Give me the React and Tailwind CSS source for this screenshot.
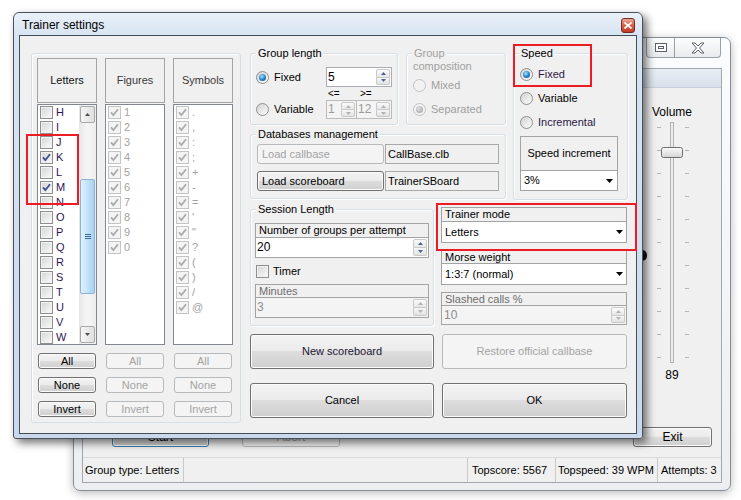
import React from 'react'
import clsx from 'clsx'

const letters = ['H', 'I', 'J', 'K', 'L', 'M', 'N', 'O', 'P', 'Q', 'R', 'S', 'T', 'U', 'V', 'W']
const figures = ['1', '2', '3', '4', '5', '6', '7', '8', '9', '0']
const symbols = ['.', ',', ':', ';', '+', '-', '=', "'", '"', '?', '(', ')', '/', '@']
const ticks = [0, 1, 2, 3, 4, 5, 6, 7, 8, 9, 10]

function Check({ checked, disabled }) {
  return (
    <span
      className={clsx(
        'w-[13px] h-[13px] shrink-0 border flex items-center justify-center',
        disabled
          ? 'border-[#c4c4c4] bg-[#f4f4f4]'
          : 'border-[#8e8f8f] bg-[linear-gradient(135deg,#d4d4d4,#fbfbfb)] shadow-[inset_0_0_0_1px_#f2f2f2]'
      )}
    >
      {checked && (
        <svg width="11" height="11" viewBox="0 0 11 11">
          <path d="M2 5.3 L4.4 8 L9 2.3" fill="none" stroke={disabled ? '#ababab' : '#3c4f8e'} strokeWidth="1.8" />
        </svg>
      )}
    </span>
  )
}

function Radio({ checked, disabled }) {
  return (
    <span
      className={clsx(
        'w-[13px] h-[13px] shrink-0 rounded-full border flex items-center justify-center',
        disabled ? 'border-[#c2c2c2] bg-[#f2f2f2]' : 'border-[#8e8f8f] bg-[linear-gradient(135deg,#d2d2d2,#fcfcfc)]'
      )}
    >
      {checked && (
        <span
          className={clsx(
            'w-[7px] h-[7px] rounded-full',
            disabled
              ? 'bg-[radial-gradient(circle_at_40%_35%,#e0e0e0,#9c9c9c)]'
              : 'bg-[radial-gradient(circle_at_40%_35%,#a8e2ff,#2a88ca_50%,#0b4880)]'
          )}
        />
      )}
    </span>
  )
}

function Btn({ children, disabled, def, className }) {
  return (
    <div
      className={clsx(
        'flex items-center rounded-[3px] border shrink-0 whitespace-nowrap',
        disabled
          ? 'border-[#b6babd] bg-[#f4f4f4] text-[#a3a3a3]'
          : 'bg-[linear-gradient(#f3f3f3_0%,#ebebeb_49%,#dddddd_50%,#cfcfcf_100%)] shadow-[inset_0_0_0_1px_#fbfbfb]',
        !disabled && (def ? 'border-[#3c7fb1]' : 'border-[#707070]'),
        className
      )}
    >
      {children}
    </div>
  )
}

function SpinBtns({ disabled }) {
  const c = disabled ? '#b3b3b3' : '#4a6290'
  return (
    <div className="flex flex-col w-[15px] h-full py-[1px] pr-[1px] shrink-0">
      <div className="flex-1 flex items-center justify-center border border-[#c9c9c9] rounded-t-[2px] bg-[linear-gradient(#fbfbfb,#e7e7e7)]">
        <svg width="5" height="3" viewBox="0 0 5 3">
          <path d="M0 3H5L2.5 0Z" fill={c} />
        </svg>
      </div>
      <div className="flex-1 flex items-center justify-center border border-t-0 border-[#c9c9c9] rounded-b-[2px] bg-[linear-gradient(#f6f6f6,#e2e2e2)]">
        <svg width="5" height="3" viewBox="0 0 5 3">
          <path d="M0 0H5L2.5 3Z" fill={c} />
        </svg>
      </div>
    </div>
  )
}

function Head({ children, className }) {
  return (
    <div className={clsx('flex items-center pl-[3px] border border-[#a3a3a3] shrink-0 whitespace-nowrap', className)}>{children}</div>
  )
}

function Drop({ value, className }) {
  return (
    <div className={clsx('flex items-center bg-white border border-t-0 border-[#a3a3a3] pl-[3px] shrink-0', className)}>
      <span className="flex-1">{value}</span>
      <svg width="7" height="4" viewBox="0 0 7 4">
        <path d="M0 0H7L3.5 4Z" fill="#000" />
      </svg>
    </div>
  )
}

function Field({ children, className }) {
  return <div className={clsx('flex items-center pl-[2px] border border-[#a8a8a8]', className)}>{children}</div>
}

function Group({ label, className, labelClass, children }) {
  return (
    <div className={clsx('pt-[6px] shrink-0', className)}>
      <div className="h-full rounded-[3px] border border-[#d5dfe5] shadow-[inset_1px_1px_0_#fff,1px_1px_0_#fff]">
        <div className={clsx('-mt-[7px] ml-[5px] px-[2px] w-fit bg-[#f0f0f0] leading-[13px] whitespace-nowrap', labelClass)}>{label}</div>
        {children}
      </div>
    </div>
  )
}

function VScroll() {
  return (
    <div className="w-[17px] h-full flex flex-col shrink-0 bg-[linear-gradient(90deg,#e6e6e6,#f5f5f5_45%,#ededed)]">
      <div className="h-[17px] mx-[1px] mt-[1px] rounded-[2px] border border-[#a9a9a9] bg-[linear-gradient(90deg,#f5f5f5,#e0e0e0)] flex items-center justify-center">
        <svg width="5" height="3" viewBox="0 0 5 3">
          <path d="M0 3H5L2.5 0Z" fill="#4d4d4d" />
        </svg>
      </div>
      <div className="h-[56px]" />
      <div className="h-[115px] mx-[1px] rounded-[2px] border border-[#8cb3d6] bg-[linear-gradient(90deg,#e2f1fc,#c3e3f9_50%,#a7d2f3)] flex items-center justify-center">
        <svg width="6" height="6" viewBox="0 0 6 6">
          <path d="M0 0.5H6M0 2.5H6M0 4.5H6" stroke="#3f6f99" strokeWidth="1" />
        </svg>
      </div>
      <div className="flex-1" />
      <div className="h-[17px] mx-[1px] mb-[1px] rounded-[2px] border border-[#a9a9a9] bg-[linear-gradient(90deg,#f5f5f5,#e0e0e0)] flex items-center justify-center">
        <svg width="5" height="3" viewBox="0 0 5 3">
          <path d="M0 0H5L2.5 3Z" fill="#4d4d4d" />
        </svg>
      </div>
    </div>
  )
}

function Column({ title, items, checked, disabled, scroll, headClass, textClass }) {
  return (
    <div className="w-[60px] flex flex-col shrink-0">
      <div className={clsx('h-[45px] border border-[#a3a3a3] flex items-center justify-center', headClass)}>{title}</div>
      <div className="mt-[1px] h-[241px] border border-[#828790] bg-white flex overflow-hidden">
        <div className="flex-1 pl-[2px] flex flex-col">
          {items.map((it) => (
            <div key={it} className="h-[15px] flex items-center gap-[3px] shrink-0">
              <Check checked={disabled || checked.includes(it)} disabled={disabled} />
              <span className={textClass}>{it}</span>
            </div>
          ))}
        </div>
        {scroll && <VScroll />}
      </div>
      <Btn disabled={disabled} className="mt-[8px] ml-[1px] w-[58px] h-[16px] justify-center">All</Btn>
      <Btn disabled={disabled} className="mt-[8px] ml-[1px] w-[58px] h-[16px] justify-center">None</Btn>
      <Btn disabled={disabled} className="mt-[8px] ml-[1px] w-[58px] h-[16px] justify-center">Invert</Btn>
    </div>
  )
}

function Dialog() {
  return (
    <div className="absolute left-[13px] top-[12px] w-[630px] h-[427px] rounded-t-[6px] rounded-b-[3px] border border-[#47525e] bg-[linear-gradient(180deg,#eaf1f9_0px,#d7e4f2_22px,#c9d9eb_100%)] shadow-[4px_4px_9px_rgba(0,0,0,0.55)] flex flex-col">
      <div className="h-[22px] flex items-start justify-between pl-[8px] pr-[7px] shrink-0">
        <span className="mt-[5px] text-[12px] leading-[14px]">Trainer settings</span>
        <div className="mt-[5px] w-[14px] h-[15px] rounded-[3px] border border-[#772a1f] bg-[linear-gradient(#eba796,#d4634b_50%,#c03b25)] flex items-center justify-center">
          <svg width="8" height="7" viewBox="0 0 8 7">
            <path d="M0.5 0.5L7.5 6.5M7.5 0.5L0.5 6.5" stroke="#fff" strokeWidth="1.6" />
          </svg>
        </div>
      </div>
      <div className="mx-[5px] h-[399px] border border-[#444e59] bg-[#f0f0f0] flex items-start shrink-0">
        <div className="ml-[11px] mt-[17px] w-[210px] h-[370px] rounded-[3px] border border-[#d5dfe5] shadow-[inset_1px_1px_0_#fff] flex gap-[8px] pl-[5px] pt-[4px] shrink-0">
          <Column title="Letters" items={letters} checked={['K', 'M']} scroll textClass="text-[#2e1452]" headClass="text-[#111]" />
          <Column title="Figures" items={figures} checked={[]} disabled textClass="text-[#a3a3a3]" headClass="text-[#3a3a3a]" />
          <Column title="Symbols" items={symbols} checked={[]} disabled textClass="text-[#a3a3a3]" headClass="text-[#3a3a3a]" />
        </div>

        <div className="ml-[9px] mt-[11px] w-[378px] flex flex-col shrink-0">
          <div className="flex">
            <div className="w-[256px] flex flex-col">
              <div className="flex gap-[8px]">
                <Group label="Group length" className="w-[148px] h-[78px]">
                  <div className="px-[5px] pt-[7px]">
                    <div className="h-[20px] flex items-center">
                      <Radio checked />
                      <span className="ml-[5px]">Fixed</span>
                      <div className="ml-auto w-[66px] h-full flex bg-white border border-[#abadb3]">
                        <span className="flex-1 pl-[1px] text-[12px] leading-[18px]">5</span>
                        <SpinBtns />
                      </div>
                    </div>
                    <div className="h-[13px] flex justify-end">
                      <div className="w-[66px] flex text-[10px] leading-[13px]">
                        <span className="w-[32px] pl-[2px]">&lt;=</span>
                        <span className="pl-[2px]">&gt;=</span>
                      </div>
                    </div>
                    <div className="h-[19px] flex items-center">
                      <Radio />
                      <span className="ml-[5px]">Variable</span>
                      <div className="ml-auto w-[66px] h-full flex">
                        <div className="w-[31px] h-full flex border border-[#bcbcbc] bg-[#f4f4f4] text-[#9a9a9a]">
                          <span className="flex-1 pl-[1px] text-[12px] leading-[17px]">1</span>
                          <SpinBtns disabled />
                        </div>
                        <div className="w-[35px] h-full flex border border-l-0 border-[#bcbcbc] bg-[#f4f4f4] text-[#9a9a9a]">
                          <span className="flex-1 pl-[1px] text-[12px] leading-[17px]">12</span>
                          <SpinBtns disabled />
                        </div>
                      </div>
                    </div>
                  </div>
                </Group>
                <Group label="Group" labelClass="w-[61px] text-[#a0a0a0]" className="w-[100px] h-[78px]">
                  <div className="pl-[6px] text-[#a0a0a0]">
                    <div className="leading-[13px]">composition</div>
                    <div className="mt-[2px] h-[20px] flex items-center">
                      <Radio disabled />
                      <span className="ml-[5px]">Mixed</span>
                    </div>
                    <div className="mt-[4px] h-[20px] flex items-center">
                      <Radio disabled checked />
                      <span className="ml-[5px]">Separated</span>
                    </div>
                  </div>
                </Group>
              </div>
              <Group label="Databases management" className="mt-[3px] w-[256px] h-[71px]">
                <div className="px-[6px] pt-[3px] flex flex-col gap-[7px]">
                  <div className="h-[20px] flex">
                    <Btn disabled className="w-[127px] h-full pl-[4px]">Load callbase</Btn>
                    <Field className="flex-1 ml-[1px]">CallBase.clb</Field>
                  </div>
                  <div className="h-[20px] flex">
                    <Btn className="w-[127px] h-full pl-[4px]">Load scoreboard</Btn>
                    <Field className="flex-1 ml-[1px]">TrainerSBoard</Field>
                  </div>
                </div>
              </Group>
            </div>
            <Group label="Speed" className="ml-[7px] w-[115px] h-[153px]">
              <div className="pl-[6px] pr-[9px] pt-[2px]">
                <div className="h-[24px] flex items-center">
                  <Radio checked />
                  <span className="ml-[5px] text-[#2b1745]">Fixed</span>
                </div>
                <div className="h-[24px] flex items-center">
                  <Radio />
                  <span className="ml-[5px]">Variable</span>
                </div>
                <div className="h-[24px] flex items-center">
                  <Radio />
                  <span className="ml-[5px] text-[#2b1745]">Incremental</span>
                </div>
                <div className="mt-[2px] h-[35px] border border-[#a3a3a3] flex items-center justify-center whitespace-nowrap">Speed increment</div>
                <Drop value="3%" className="h-[20px] pr-[4px]" />
              </div>
            </Group>
          </div>

          <div className="mt-[3px] flex">
            <Group label="Session Length" className="w-[184px] h-[123px]">
              <div className="px-[4px] pt-[7px]">
                <Head className="h-[15px] pl-[2px]">Number of groups per attempt</Head>
                <div className="h-[20px] flex bg-white border border-t-0 border-[#a3a3a3]">
                  <span className="flex-1 pl-[1px] text-[12px] leading-[19px]">20</span>
                  <SpinBtns />
                </div>
                <div className="mt-[3px] h-[20px] flex items-center">
                  <span className="ml-[1px] flex">
                    <Check />
                  </span>
                  <span className="ml-[4px]">Timer</span>
                </div>
                <Head className="mt-[3px] h-[14px] pl-[2px] text-[#6d6d6d]">Minutes</Head>
                <div className="h-[20px] flex bg-[#f4f4f4] border border-t-0 border-[#a3a3a3] text-[#8d8d8d]">
                  <span className="flex-1 pl-[1px] text-[12px] leading-[19px]">3</span>
                  <SpinBtns disabled />
                </div>
              </div>
            </Group>
            <div className="ml-[7px] w-[186px] pt-[4px] flex flex-col">
              <Head className="h-[15px]">Trainer mode</Head>
              <Drop value="Letters" className="h-[21px] pr-[3px]" />
              <Head className="mt-[7px] h-[14px]">Morse weight</Head>
              <Drop value="1:3:7 (normal)" className="h-[21px] pr-[3px]" />
              <Head className="mt-[7px] h-[14px] text-[#6d6d6d]">Slashed calls %</Head>
              <div className="h-[19px] flex bg-[#f4f4f4] border border-t-0 border-[#a3a3a3] text-[#8d8d8d]">
                <span className="flex-1 pl-[2px] text-[12px] leading-[18px]">10</span>
                <SpinBtns disabled />
              </div>
            </div>
          </div>

          <div className="mt-[8px] flex gap-[8px]">
            <Btn className="w-[184px] h-[35px] justify-center text-[#221433]">New scoreboard</Btn>
            <Btn disabled className="w-[185px] h-[35px] justify-center">Restore official callbase</Btn>
          </div>
          <div className="mt-[14px] flex gap-[8px]">
            <Btn className="w-[184px] h-[35px] justify-center">Cancel</Btn>
            <Btn className="w-[185px] h-[35px] justify-center">OK</Btn>
          </div>
        </div>
      </div>
    </div>
  )
}

function BackWindow() {
  return (
    <div className="absolute left-[73px] top-[37px] w-[658px] h-[454px] rounded-[7px] border border-[#868d95] bg-[linear-gradient(180deg,#fbfcfd,#eceef1)] shadow-[0_2px_10px_rgba(0,0,0,0.28)] flex flex-col">
      <div className="h-[30px] flex justify-end items-start pr-[9px] shrink-0">
        <div className="flex h-[20px] rounded-b-[4px] border border-t-0 border-[#9aa1a9] overflow-hidden bg-[linear-gradient(#fdfdfd,#e8ebee)]">
          <div className="w-[28px] flex items-center justify-center border-r border-[#9aa1a9]">
            <svg width="12" height="10" viewBox="0 0 12 10">
              <rect x="0.5" y="0.5" width="11" height="8" fill="#fff" stroke="#5c6168" />
              <rect x="3.5" y="3.5" width="5" height="2" fill="none" stroke="#5c6168" />
            </svg>
          </div>
          <div className="w-[45px] flex items-center justify-center">
            <svg width="14" height="12" viewBox="0 0 14 12">
              <path d="M1 1H4L7 4L10 1H13L8.5 6L13 11H10L7 8L4 11H1L5.5 6Z" fill="#fff" stroke="#5c6168" strokeLinejoin="round" />
            </svg>
          </div>
        </div>
      </div>
      <div className="mx-[8px] h-[415px] border border-[#a0a7ae] bg-[#f0f0f0] flex flex-col shrink-0">
        <div className="h-[19px] bg-[linear-gradient(#e7edf4,#d8e1eb)] border-b border-[#c8d1db] shrink-0" />
        <div className="flex-1 flex justify-end pr-[19px]">
          <div className="w-[10px] h-[11px] mt-[162px] -mr-[5px] rounded-full bg-[#111]" />
          <div className="w-[60px] flex flex-col items-center pt-[17px] text-[12px]">
            <div className="leading-[14px]">Volume</div>
            <svg className="mt-[3px]" width="60" height="241" viewBox="0 0 60 241">
              <defs>
                <linearGradient id="thumb" x1="0" y1="0" x2="0" y2="1">
                  <stop offset="0" stopColor="#fbfbfb" />
                  <stop offset="1" stopColor="#d3d3d3" />
                </linearGradient>
              </defs>
              <rect x="28.5" y="0.5" width="3" height="240" fill="#e9ebec" stroke="#b2b5b8" />
              {ticks.map((i) => (
                <g key={i}>
                  <line x1="15" x2="19" y1={5.5 + 23 * i} y2={5.5 + 23 * i} stroke="#b5b5b5" />
                  <line x1="43" x2="47" y1={5.5 + 23 * i} y2={5.5 + 23 * i} stroke="#b5b5b5" />
                </g>
              ))}
              <rect x="19.5" y="25.5" width="21" height="10" rx="2" fill="url(#thumb)" stroke="#6f6f6f" />
            </svg>
            <div className="mt-[6px] leading-[13px]">89</div>
          </div>
        </div>
        <div className="h-[20px] flex mb-[10px] text-[12px] shrink-0">
          <Btn def className="ml-[29px] w-[97px] h-full justify-center">Start</Btn>
          <Btn disabled className="ml-[33px] w-[98px] h-full justify-center">Abort</Btn>
          <Btn className="ml-auto mr-[9px] w-[79px] h-full justify-center">Exit</Btn>
        </div>
        <div className="h-[25px] flex border-t border-[#dadada] text-[11px] whitespace-nowrap shrink-0">
          <div className="w-[101px] flex items-center pl-[2px] border-r border-[#c9c9c9] overflow-hidden">Group type: Letters</div>
          <div className="flex-1 border-r border-[#c9c9c9]" />
          <div className="w-[88px] flex items-center pl-[4px] border-r border-[#c9c9c9] overflow-hidden">Topscore: 5567</div>
          <div className="w-[102px] flex items-center pl-[2px] border-r border-[#c9c9c9] overflow-hidden">Topspeed: 39 WPM</div>
          <div className="w-[63px] flex items-center pl-[3px] overflow-hidden">Attempts: 3</div>
        </div>
      </div>
    </div>
  )
}

export default function App() {
  return (
    <div className="relative w-[741px] h-[500px] overflow-hidden bg-white font-['Liberation_Sans',Arial,sans-serif] text-[11px] leading-[13px] text-black">
      <BackWindow />
      <Dialog />
      <div className="absolute left-[26px] top-[134px] w-[53px] h-[71px] border-2 border-[#ec1c24]" />
      <div className="absolute left-[513px] top-[44px] w-[79px] h-[43px] border-2 border-[#ec1c24]" />
      <div className="absolute left-[436px] top-[203px] w-[201px] h-[48px] border-2 border-[#ec1c24]" />
    </div>
  )
}
